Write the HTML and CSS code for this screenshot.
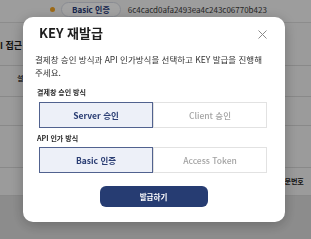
FILE: index.html
```html
<!DOCTYPE html>
<html lang="ko">
<head>
<meta charset="utf-8">
<link rel="stylesheet" href="styles.css">
</head>
<body>
<div class="page">
  <header class="topbar">
    <span class="dot"></span>
    <span class="pill">Basic 인증</span>
    <span class="hash">6c4cacd0afa2493ea4c243c06770b423</span>
  </header>
  <div class="section-title">I 접근 정보</div>
  <div class="row row-a"><span class="cell-label">설정</span></div>
  <div class="row row-b"></div>
  <div class="row row-c"></div>
  <div class="row row-d"><span class="cell-right">주문번호</span></div>
  <div class="page-bottom"></div>
</div>

<div class="overlay">
  <div class="modal">
    <div class="modal-head">
      <h2 class="modal-title">KEY 재발급</h2>
      <button class="close" aria-label="닫기">
        <svg width="9" height="9" viewBox="0 0 9 9"><path d="M0.5 0.5 L8.5 8.5 M8.5 0.5 L0.5 8.5" stroke="#8a8a8a" stroke-width="1" fill="none"/></svg>
      </button>
    </div>
    <p class="desc">결제창 승인 방식과 API 인가방식을 선택하고 KEY 발급을 진행해 주세요.</p>
    <div class="field-label first">결제창 승인 방식</div>
    <div class="seg">
      <button class="seg-btn on">Server 승인</button>
      <button class="seg-btn">Client 승인</button>
    </div>
    <div class="field-label">API 인가 방식</div>
    <div class="seg">
      <button class="seg-btn on">Basic 인증</button>
      <button class="seg-btn">Access Token</button>
    </div>
    <div class="actions">
      <button class="primary">발급하기</button>
    </div>
  </div>
</div>
</body>
</html>
```
FILE: styles.css
```css
* { box-sizing: border-box; }
html, body {
  margin: 0;
  padding: 0;
  width: 311px;
  height: 239px;
  overflow: hidden;
  font-family: "Noto Sans CJK KR", "Noto Sans", sans-serif;
}
.page {
  width: 311px;
  height: 239px;
  background: #f2f2f2;
  display: flex;
  flex-direction: column;
}
.topbar {
  height: 23px;
  flex: none;
  display: flex;
  align-items: flex-start;
  padding: 2px 0 0 50px;
  background: #f6f6f6;
  border-bottom: 1px solid #dcdcdc;
}
.dot {
  width: 5px;
  height: 5px;
  border-radius: 50%;
  background: #f5a524;
  margin-top: 5px;
}
.pill {
  margin-left: 6px;
  height: 15px;
  padding: 0 10px;
  border-radius: 8px;
  background: #ffffff;
  border: 1px solid #d8dce6;
  color: #24387a;
  font-size: 8px;
  font-weight: 700;
  line-height: 13px;
}
.hash {
  margin-left: 7px;
  font-size: 8px;
  line-height: 15px;
  color: #3c3c3c;
}
.section-title {
  height: 42px;
  flex: none;
  padding: 17px 0 0 0;
  font-size: 9px;
  line-height: 12px;
  font-weight: 700;
  color: #1a1a1a;
}
.row {
  flex: none;
  border-top: 1px solid #d6d6d6;
}
.row-a { height: 31px; }
.row-b { height: 29px; }
.row-c { height: 42px; }
.row-d { height: 28px; }
.cell-label {
  display: block;
  padding: 7px 0 0 17px;
  font-size: 7px;
  font-weight: 700;
  color: #444;
}
.cell-right {
  display: block;
  padding: 8px 0 0 278px;
  font-size: 7px;
  font-weight: 700;
  color: #222;
  white-space: nowrap;
}
.page-bottom {
  flex: 1;
  border-top: 1px solid #d6d6d6;
  background: #dcdcdc;
}

.overlay {
  position: fixed;
  inset: 0;
  background: rgba(0, 0, 0, 0.36);
  display: flex;
  align-items: flex-start;
  padding: 17px 0 0 23px;
}
.modal {
  width: 262px;
  height: 205px;
  background: #fff;
  border-radius: 10px;
  box-shadow: 0 3px 14px rgba(0, 0, 0, 0.25);
  padding: 8px 18px 15px 15px;
  display: flex;
  flex-direction: column;
}
.modal-head {
  display: flex;
  align-items: center;
  justify-content: space-between;
  height: 16px;
}
.modal-title {
  margin: 0 0 0 1px;
  font-size: 13px;
  line-height: 16px;
  font-weight: 700;
  color: #1e1e1e;
}
.close {
  border: 0;
  background: none;
  padding: 0;
  width: 9px;
  height: 9px;
  margin: 3px 0 0 0;
  display: block;
}
.close svg { display: block; }
.desc {
  margin: 12px 0 0 -3px;
  font-size: 8.5px;
  line-height: 13px;
  color: #333;
  word-break: keep-all;
}
.field-label {
  margin: 5px 0 5px -1px;
  font-size: 7px;
  line-height: 10px;
  font-weight: 700;
  color: #2a2a2a;
}
.field-label.first { margin-top: 8px; }
.seg {
  display: flex;
  margin-left: 1px;
  height: 26px;
}
.seg + .field-label { margin-bottom: 4px; }
.seg-btn {
  flex: 1;
  margin: 0;
  border: 1px solid #e2e2e2;
  background: #fff;
  color: #a3a3a3;
  font-family: inherit;
  font-size: 8.5px;
  font-weight: 500;
  padding: 0;
}
.seg-btn.on {
  background: #edf0f8;
  border-color: #51628f;
  color: #2a3d73;
  font-weight: 700;
}
.actions {
  margin-top: 13px;
  display: flex;
  justify-content: center;
  padding-left: 2px;
}
.primary {
  width: 108px;
  height: 21px;
  border: 0;
  border-radius: 6px;
  background: #263c72;
  color: #fff;
  font-family: inherit;
  font-size: 7.5px;
  font-weight: 700;
  padding: 0;
}
```
